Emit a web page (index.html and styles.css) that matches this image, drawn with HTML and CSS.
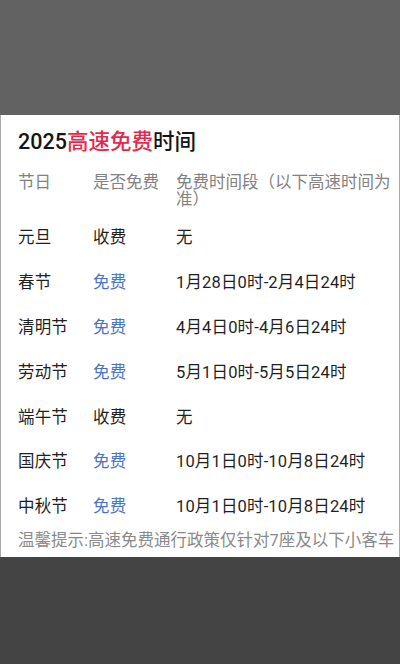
FILE: index.html
```html
<!DOCTYPE html>
<html lang="zh-CN">
<head>
<meta charset="utf-8">
<title>2025高速免费时间</title>
<link rel="stylesheet" href="styles.css">
</head>
<body>
<div class="top"></div>
<div class="card">
  <h1 class="title">2025<span class="red">高速免费</span>时间</h1>
  <div class="row head">
    <div>节日</div>
    <div>是否免费</div>
    <div>免费时间段（以下高速时间为准）</div>
  </div>
  <div class="rows">
    <div class="row"><div>元旦</div><div>收费</div><div>无</div></div>
    <div class="row"><div>春节</div><div class="free">免费</div><div>1月28日0时-2月4日24时</div></div>
    <div class="row"><div>清明节</div><div class="free">免费</div><div>4月4日0时-4月6日24时</div></div>
    <div class="row"><div>劳动节</div><div class="free">免费</div><div>5月1日0时-5月5日24时</div></div>
    <div class="row"><div>端午节</div><div>收费</div><div>无</div></div>
    <div class="row"><div>国庆节</div><div class="free">免费</div><div>10月1日0时-10月8日24时</div></div>
    <div class="row"><div>中秋节</div><div class="free">免费</div><div>10月1日0时-10月8日24时</div></div>
  </div>
  <p class="tip">温馨提示:高速免费通行政策仅针对7座及以下小客车</p>
</div>
<div class="bottom"></div>
</body>
</html>
```
FILE: styles.css
```css
html, body {
  margin: 0;
  padding: 0;
}
body {
  background: #444444;
  font-family: "Roboto", "Noto Sans CJK SC", sans-serif;
  height: 664px;
  overflow: hidden;
}
.top {
  height: 115px;
  background: #626262;
}
.card {
  box-sizing: border-box;
  height: 442px;
  background: #ffffff;
  border-left: 1px solid #a8a8a8;
  border-right: 1px solid #a8a8a8;
  padding: 13px 0 0 17px;
  overflow: hidden;
}
.title {
  margin: 0;
  font-size: 21.5px;
  line-height: 28px;
  font-weight: 500;
  color: #151515;
}
.red {
  color: #e5294c;
}
.row {
  display: grid;
  grid-template-columns: 75px 83px 1fr;
  padding-right: 8px;
  font-size: 16.5px;
  color: #1f1f1f;
}
.head {
  margin-top: 17.5px;
  line-height: 17px;
  color: #828282;
}
.rows {
  margin-top: 8px;
}
.rows .row {
  height: 44.9px;
  align-items: center;
  line-height: 22px;
  letter-spacing: 0.15px;
}
.free {
  color: #4a74c4;
}
.tip {
  margin: 0;
  font-size: 16.5px;
  line-height: 22px;
  color: #8a8a8a;
  white-space: nowrap;
}
```
